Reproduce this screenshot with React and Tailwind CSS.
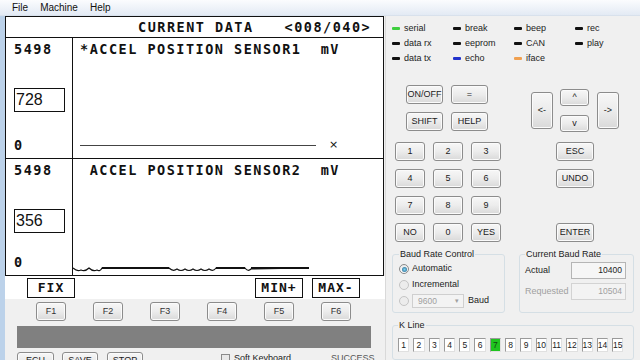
import React from 'react';

const Btn = ({ className = '', children }) => (
  <div
    className={`flex shrink-0 items-center justify-center rounded-[3px] border border-[#8c8c8c] bg-linear-to-b from-[#f7f7f7] via-[#ececec] to-[#d9d9d9] text-[9px] leading-none text-[#1b1b1b] shadow-[inset_0_0_0_1px_#fbfbfb] ${className}`}
  >
    {children}
  </div>
);

const Led = ({ color, label }) => (
  <div className="flex h-[15px] w-[64px] items-center">
    <span className={`h-[3px] w-[8px] rounded-[1px] ${color}`} />
    <span className="ml-[4px] text-[9px] text-[#222]">{label}</span>
  </div>
);

const Radio = ({ checked, dim }) => (
  <span
    className={`flex h-[10px] w-[10px] items-center justify-center rounded-full border ${
      dim ? 'border-[#c4c4c4] bg-[#ececec]' : 'border-[#8a8a8a] bg-linear-to-b from-[#eaeaea] to-[#fdfdfd]'
    }`}
  >
    {checked && <span className="h-[5px] w-[5px] rounded-full bg-[radial-gradient(circle,#7fd4f2,#1f5d86)]" />}
  </span>
);

const Panel = ({ max, value, label, bottom }) => (
  <div className="flex min-h-0 flex-1">
    <div className="flex w-[67px] flex-col border-r border-[#111] pl-[8px] pt-[4px]">
      <span className="h-[14px] leading-[14px]">{max}</span>
      <div className="mt-[32px] flex h-[24px] w-[51px] items-center border-[1.5px] border-[#111] pl-[1px] font-['Liberation_Sans',sans-serif] text-[16px] font-normal tracking-normal">
        {value}
      </div>
      <span className="mt-auto mb-[6px] h-[14px] leading-[14px]">0</span>
    </div>
    <div className="flex flex-1 flex-col pt-[4px] pl-[7px]">
      <span className="h-[14px] whitespace-pre leading-[14px]">{label}</span>
      <div className="mt-auto">{bottom}</div>
    </div>
  </div>
);

export default function App() {
  const fKeys = ['F1', 'F2', 'F3', 'F4', 'F5', 'F6'];
  const kLine = Array.from({ length: 15 }, (_, i) => i + 1);

  return (
    <div className="flex h-[360px] w-[640px] flex-col overflow-hidden bg-[#f0f0f0] font-['Liberation_Sans',sans-serif]">
      {/* menu */}
      <div className="flex h-[16px] shrink-0 items-center gap-[12px] border-b border-[#d8e1ec] bg-linear-to-b from-[#fbfcfe] to-[#e3eaf4] pl-[12px] text-[10px] text-[#111]">
        <span>File</span>
        <span>Machine</span>
        <span>Help</span>
      </div>

      <div className="flex min-h-0 flex-1">
        <div className="w-[5px] shrink-0 bg-[#bcd2ea]" />

        {/* left area */}
        <div className="flex w-[380px] shrink-0 flex-col">
          <div className="flex h-[260px] w-[379px] shrink-0 flex-col border border-[#111] bg-white font-['DejaVu_Sans_Mono',monospace] text-[13.5px] font-bold tracking-[1.5px] text-[#111]">
            <div className="flex h-[21px] shrink-0 items-center border-b border-[#111] pl-[132px]">
              <span>CURRENT DATA</span>
              <span className="ml-[31px]">&lt;008/040&gt;</span>
            </div>
            <div className="flex h-[121px] shrink-0 border-b border-[#111]">
              <Panel
                max="5498"
                value="728"
                label="*ACCEL POSITION SENSOR1  mV"
                bottom={
                  <div className="mb-[6px] flex h-[14px] items-center">
                    <div className="h-[1px] w-[236px] bg-[#444]" />
                    <span className="ml-[13px] font-['DejaVu_Sans',sans-serif] text-[11px] font-normal">×</span>
                  </div>
                }
              />
            </div>
            <Panel
              max="5498"
              value="356"
              label=" ACCEL POSITION SENSOR2  mV"
              bottom={
                <svg width="240" height="8" className="-ml-[7px] mb-[1px] block" viewBox="0 0 240 8">
                  <path
                    d="M0 2 Q4 6 8 4 Q12 6 16 2 Q20 6 24 4 Q27 6 29 2 L96 2 Q100 6 104 3 Q108 6 112 3 Q116 6 120 3 Q124 6 128 3 Q132 6 136 3 Q140 6 143 2 L172 2 Q175 6 178 3 L236 2"
                    fill="none"
                    stroke="#111"
                    strokeWidth="1.2"
                  />
                  <path d="M29 2 L96 2 M143 2 L172 2 M178 2 L236 2" stroke="#111" strokeWidth="2.2" />
                </svg>
              }
            />
          </div>

          {/* soft keys */}
          <div className="flex h-[23px] shrink-0 items-center bg-white font-['DejaVu_Sans_Mono',monospace] text-[13px] font-bold tracking-[1px] text-[#111]">
            <div className="ml-[22px] flex h-[20px] w-[48px] items-center justify-center border-[1.5px] border-[#111]">FIX</div>
            <div className="ml-[180px] flex h-[20px] w-[48px] items-center justify-center border-[1.5px] border-[#111]">MIN+</div>
            <div className="ml-[9px] flex h-[20px] w-[48px] items-center justify-center border-[1.5px] border-[#111]">MAX-</div>
          </div>
          <div className="flex h-[23px] shrink-0 items-center gap-[27px] pl-[31px] pt-[1px]">
            {fKeys.map((f) => (
              <Btn key={f} className="h-[19px] w-[30px] text-[8px] text-[#333]">
                {f}
              </Btn>
            ))}
          </div>
          <div className="ml-[12px] mt-[4px] h-[22px] w-[354px] shrink-0 bg-[#808080]" />
          <div className="mt-[4px] flex shrink-0 items-start pl-[12px]">
            <Btn className="h-[16px] w-[37px]">ECU</Btn>
            <Btn className="ml-[8px] h-[16px] w-[36px]">SAVE</Btn>
            <Btn className="ml-[9px] h-[16px] w-[36px]">STOP</Btn>
            <span className="ml-[78px] mt-[2px] h-[9px] w-[9px] border border-[#8a8a8a] bg-[#e8e8e8]" />
            <span className="ml-[4px] text-[9px] text-[#222]">Soft Keyboard</span>
            <span className="ml-[40px] text-[9px] text-[#555]">SUCCESS</span>
          </div>
        </div>

        {/* right panel */}
        <div className="flex flex-1 flex-col border-l border-[#d9d9d9] bg-[#f0f0f0] pr-[4px] text-[#1b1b1b]">
          <div className="grid shrink-0 grid-cols-4 pl-[6px] pt-[5px]">
            <Led color="bg-[#3fcf3f]" label="serial" />
            <Led color="bg-[#111]" label="break" />
            <Led color="bg-[#111]" label="beep" />
            <Led color="bg-[#111]" label="rec" />
            <Led color="bg-[#111]" label="data rx" />
            <Led color="bg-[#111]" label="eeprom" />
            <Led color="bg-[#111]" label="CAN" />
            <Led color="bg-[#111]" label="play" />
            <Led color="bg-[#111]" label="data tx" />
            <Led color="bg-[#2233cc]" label="echo" />
            <Led color="bg-[#f0a050]" label="iface" />
          </div>

          {/* keypad */}
          <div className="mt-[19px] flex shrink-0 pl-[9px]">
            <div className="flex flex-col">
              <div className="ml-[11px] grid grid-cols-[37px_37px] gap-x-[8px] gap-y-[8px]">
                <Btn className="h-[19px]">ON/OFF</Btn>
                <Btn className="h-[19px]">=</Btn>
                <Btn className="h-[19px]">SHIFT</Btn>
                <Btn className="h-[19px]">HELP</Btn>
              </div>
              <div className="mt-[11px] grid grid-cols-[30px_30px_30px] gap-x-[8px] gap-y-[8px]">
                {['1', '2', '3', '4', '5', '6', '7', '8', '9', 'NO', '0', 'YES'].map((k) => (
                  <Btn key={k} className="h-[19px]">
                    {k}
                  </Btn>
                ))}
              </div>
            </div>
            <div className="ml-[30px] flex flex-col">
              <div className="mt-[4px] flex items-start">
                <Btn className="mt-[3px] h-[37px] w-[22px]">&lt;-</Btn>
                <div className="ml-[7px] flex flex-col gap-[9px]">
                  <Btn className="h-[17px] w-[29px]">^</Btn>
                  <Btn className="h-[17px] w-[29px]">v</Btn>
                </div>
                <Btn className="ml-[8px] mt-[3px] h-[37px] w-[22px]">-&gt;</Btn>
              </div>
              <Btn className="ml-[25px] mt-[10px] h-[19px] w-[38px]">ESC</Btn>
              <Btn className="ml-[25px] mt-[8px] h-[19px] w-[38px]">UNDO</Btn>
              <Btn className="ml-[25px] mt-[35px] h-[19px] w-[38px]">ENTER</Btn>
            </div>
          </div>

          {/* baud */}
          <div className="mt-[7px] flex shrink-0 pl-[6px]">
            <fieldset className="h-[64px] w-[113px] rounded-[3px] border border-[#d5dfe5] px-[6px]">
              <legend className="px-[1px] text-[9px] leading-[11px] text-[#222]">Baud Rate Control</legend>
              <div className="mt-[1px] flex h-[16px] items-center gap-[3px] text-[9px]">
                <Radio checked />
                <span>Automatic</span>
              </div>
              <div className="flex h-[16px] items-center gap-[3px] text-[9px]">
                <Radio dim />
                <span>Incremental</span>
              </div>
              <div className="flex h-[16px] items-center text-[9px]">
                <Radio dim />
                <div className="ml-[3px] flex h-[14px] w-[52px] items-center justify-between border border-[#cfcfcf] bg-[#f3f3f3] pl-[5px] pr-[4px] text-[8.5px] text-[#a0a0a0]">
                  <span>9600</span>
                  <span className="text-[7px]">▾</span>
                </div>
                <span className="ml-[4px]">Baud</span>
              </div>
            </fieldset>
            <fieldset className="ml-[14px] h-[64px] w-[115px] rounded-[3px] border border-[#d5dfe5] pl-[5px] pr-[7px]">
              <legend className="px-[1px] text-[9px] leading-[11px] text-[#222]">Current Baud Rate</legend>
              <div className="mt-[2px] flex items-center justify-between">
                <span className="text-[9px]">Actual</span>
                <div className="flex h-[17px] w-[55px] items-center justify-end border border-[#b5b5b5] bg-[#f6f6f6] pr-[3px] text-[8.5px] text-[#222]">
                  10400
                </div>
              </div>
              <div className="mt-[4px] flex items-center justify-between">
                <span className="text-[9px] text-[#a0a0a0]">Requested</span>
                <div className="flex h-[17px] w-[55px] items-center justify-end border border-[#d3d3d3] bg-[#f3f3f3] pr-[3px] text-[8.5px] text-[#a0a0a0]">
                  10504
                </div>
              </div>
            </fieldset>
          </div>

          <fieldset className="ml-[6px] mt-[7px] h-[40px] w-[242px] shrink-0 rounded-[3px] border border-[#d5dfe5] pl-[5px]">
            <legend className="px-[1px] text-[9px] leading-[11px] text-[#222]">K Line</legend>
            <div className="mt-[7px] flex gap-[4px]">
              {kLine.map((n) => (
                <span
                  key={n}
                  className={`flex h-[14px] w-[11.3px] items-center justify-center border border-l-[#9a9a9a] border-t-[#9a9a9a] border-r-[#e0e0e0] border-b-[#e0e0e0] text-[8.5px] ${
                    n === 7 ? 'bg-[#1fc41f] text-[#114411]' : 'bg-white text-[#222]'
                  }`}
                >
                  {n}
                </span>
              ))}
            </div>
          </fieldset>
        </div>
      </div>
    </div>
  );
}
